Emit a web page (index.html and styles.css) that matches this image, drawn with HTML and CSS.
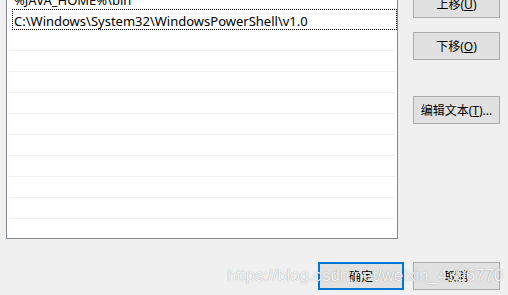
FILE: index.html
```html
<!DOCTYPE html>
<html lang="zh-CN">
<head>
  <meta charset="UTF-8" />
  <title>编辑环境变量</title>
  <link rel="stylesheet" href="styles.css">
</head>
<body>

  <div class="dialog">
    <div class="main">
      <!-- Path list -->
      <div class="list">
        <div class="row">%JAVA_HOME%\bin</div>
        <div class="row focus">C:\Windows\System32\WindowsPowerShell\v1.0</div>
        <div class="row"></div>
        <div class="row"></div>
        <div class="row"></div>
        <div class="row"></div>
        <div class="row"></div>
        <div class="row"></div>
        <div class="row"></div>
        <div class="row"></div>
        <div class="row"></div>
      </div>

      <!-- Side buttons -->
      <div class="side">
        <button class="btn">上移(<u>U</u>)</button>
        <button class="btn">下移(<u>O</u>)</button>
        <button class="btn gap">编辑文本(<u>T</u>)...</button>
      </div>
    </div>

    <div class="footer">
      <button class="btn ok">确定</button>
      <button class="btn">取消</button>
    </div>
  </div>

  <div class="watermark">https://blog.csdn.net/weixin_4396770</div>

</body>
</html>
```

FILE: styles.css
```css
body {
  font-family: "Noto Sans", "Noto Sans CJK SC", sans-serif;
  font-size: 12px;
  background-color: #f0f0f0;
  color: black;
  margin: 0;
  padding: 0;
  overflow: hidden;
}

.dialog {
  margin-top: -13px;
  padding: 0 8px 0 6px;
}

.main {
  display: flex;
  gap: 15px;
}

.list {
  width: 390px;
  background-color: white;
  border: 1px solid #828790;
  padding-bottom: 19px;
}

.row {
  position: relative;
  height: 18px;
  padding-top: 2px;
  line-height: 20px;
  font-size: 13px;
  margin: 0 1px;
  padding-left: 6px;
  border-bottom: 1px solid #f0f0f0;
  white-space: nowrap;
}

.focus::after {
  content: "";
  position: absolute;
  left: 4px;
  right: -1px;
  top: 0;
  bottom: -1px;
  border: 1px dotted black;
}

.side {
  display: flex;
  flex-direction: column;
  gap: 14px;
  padding-top: 3px;
}

.btn {
  font-family: inherit;
  font-size: 12px;
  width: 87px;
  height: 28px;
  padding: 0;
  background-color: #e1e1e1;
  border: 1px solid #adadad;
  color: black;
}

.gap {
  margin-top: 22px;
}

.footer {
  display: flex;
  justify-content: flex-end;
  gap: 9px;
  margin-top: 23px;
}

.ok {
  width: 86px;
  border: 2px solid #0078d7;
}

.watermark {
  position: absolute;
  left: 227px;
  top: 266px;
  font-family: "Liberation Sans", Arial, sans-serif;
  font-size: 17px;
  letter-spacing: -0.1px;
  color: rgba(255, 255, 255, 0.9);
  text-shadow: 0 0 1px rgba(0, 0, 0, 0.4);
  white-space: nowrap;
}
```
